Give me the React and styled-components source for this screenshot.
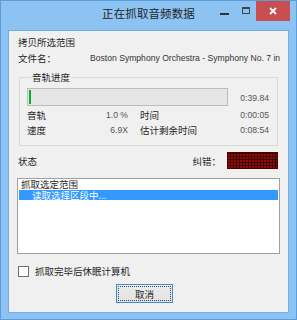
import React from 'react';
import styled, { createGlobalStyle } from 'styled-components';

const Global = createGlobalStyle`
  html, body { margin: 0; padding: 0; background: #fff; }
  body { font-family: "Noto Sans CJK SC", "Liberation Sans", sans-serif; }
  * { box-sizing: border-box; }
`;

const Window = styled.div`
  width: 297px;
  height: 320px;
  background: #8cc3f2;
  border: 1px solid #5d9cd9;
  display: flex;
  flex-direction: column;
`;

const TitleBar = styled.div`
  height: 29px;
  display: grid;
  grid-template-columns: 1fr auto 1fr;
  align-items: start;
`;

const Title = styled.div`
  grid-column: 2;
  font-size: 11.5px;
  line-height: 25px;
  color: #252525;
  letter-spacing: 0.1px;
`;

const Controls = styled.div`
  grid-column: 3;
  justify-self: end;
  display: flex;
  margin-right: 6px;
  height: 20px;
`;

const CtrlBtn = styled.div`
  width: ${p => p.w}px;
  height: 20px;
  display: flex;
  align-items: center;
  justify-content: center;
  background: ${p => p.red ? '#c74f4f' : 'transparent'};
`;

const Client = styled.div`
  flex: 1;
  margin: 0 7px 6px 7px;
  background: #f0f0f0;
  border: 1px solid #74aee2;
  padding: 4px 9px 0 9px;
  font-size: 9.5px;
  color: #262626;
  display: flex;
  flex-direction: column;
`;

const Line = styled.div`
  height: 14px;
  line-height: 14px;
  display: flex;
  white-space: nowrap;
  margin-top: ${p => p.mt || 0}px;
`;

const Label = styled.span`
  flex-shrink: 0;
`;

const FileName = styled.span`
  margin-left: 34px;
  font-family: "Liberation Sans", sans-serif;
  font-size: 8.6px;
  color: #333;
  white-space: nowrap;
`;

const Group = styled.fieldset`
  margin: 6px 1px 0 1px;
  border: 1px solid #d9d9d9;
  padding: 5px 8px 8px 7px;
  display: grid;
  grid-template-columns: 70px 31px 100px 41px;
  row-gap: 1px;
  align-items: center;
`;

const Legend = styled.legend`
  padding: 0 1px;
  margin-left: 4px;
  font-size: 9.5px;
  line-height: 12px;
`;

const Bar = styled.div`
  grid-column: 1 / 4;
  height: 18px;
  background: #e6e6e6;
  border: 1px solid #bcbcbc;
  padding: 1px;
  margin-bottom: 1px;
`;

const Fill = styled.div`
  height: 100%;
  background: #06b025;
`;

const Cell = styled.div`
  height: ${p => p.h || 14}px;
  line-height: ${p => p.h || 14}px;
  text-align: ${p => p.right ? 'right' : 'left'};
  padding-left: ${p => p.pl || 0}px;
  font-family: ${p => p.num ? '"Liberation Sans", sans-serif' : 'inherit'};
  font-size: ${p => p.num ? '8.6px' : 'inherit'};
  color: ${p => p.num ? '#555' : 'inherit'};
  white-space: nowrap;
`;

const StatusRow = styled.div`
  display: flex;
  align-items: center;
  justify-content: space-between;
  margin: 6px 1px 0 0;
  height: 17px;
`;

const Ecc = styled.div`
  display: flex;
  align-items: center;
  gap: 6px;
`;

const Led = styled.div`
  width: 51px;
  height: 17px;
  border: 1px solid #4a0000;
  background-color: #9a0a0a;
  background-image:
    repeating-linear-gradient(90deg, transparent 0 2px, #3a0000 2px 3px),
    repeating-linear-gradient(0deg, transparent 0 2px, #3a0000 2px 3px);
`;

const List = styled.div`
  margin: 9px 0 0 -1px;
  height: 76px;
  width: 263px;
  background: #fff;
  border: 1px solid #a0a0a0;
  padding: 0 1px;
`;

const Item = styled.div`
  height: 10.5px;
  line-height: 10.5px;
  padding-left: ${p => p.indent ? 13 : 2}px;
  background: ${p => p.sel ? '#3399ff' : 'transparent'};
  color: ${p => p.sel ? '#fff' : '#262626'};
  white-space: nowrap;
`;

const CheckRow = styled.label`
  display: flex;
  align-items: center;
  gap: 6px;
  margin-top: 11px;
  height: 12px;
`;

const Box = styled.span`
  width: 11px;
  height: 11px;
  border: 1px solid #707070;
  background: #fff;
`;

const ButtonRow = styled.div`
  display: flex;
  justify-content: center;
  margin: 7px 8px 0 0;
`;

const Button = styled.div`
  width: 57px;
  height: 19px;
  border: 1px solid #3c8ad8;
  background: linear-gradient(#ececec, #e2e2e2);
  padding: 1px;
`;

const Focus = styled.div`
  height: 100%;
  border: 1px dotted #444;
  display: flex;
  align-items: center;
  justify-content: center;
  font-size: 9.5px;
  line-height: 12px;
`;

export default function App() {
  return (
    <>
      <Global />
      <Window>
        <TitleBar>
          <Title>正在抓取音频数据</Title>
          <Controls>
            <CtrlBtn w={23}>
              <svg width="9" height="9" viewBox="0 0 9 9"><rect x="0" y="6" width="9" height="2" fill="#333" /></svg>
            </CtrlBtn>
            <CtrlBtn w={20}>
              <svg width="9" height="8" viewBox="0 0 9 8"><rect x="0.5" y="0.5" width="7" height="6" fill="none" stroke="#444" /><rect x="0.5" y="0.5" width="7" height="1.5" fill="#444" /></svg>
            </CtrlBtn>
            <CtrlBtn w={34} red>
              <svg width="8" height="8" viewBox="0 0 8 8"><path d="M1 1L7 7M7 1L1 7" stroke="#fff" strokeWidth="1.8" /></svg>
            </CtrlBtn>
          </Controls>
        </TitleBar>
        <Client>
          <Line>拷贝所选范围</Line>
          <Line mt={2}><Label>文件名：</Label><FileName>Boston Symphony Orchestra - Symphony No. 7 in</FileName></Line>
          <Group>
            <Legend>音轨进度</Legend>
            <Bar><Fill style={{ width: '1%' }} /></Bar>
            <Cell h={18} right num>0:39.84</Cell>
            <Cell>音轨</Cell>
            <Cell right num>1.0 %</Cell>
            <Cell pl={12}>时间</Cell>
            <Cell right num>0:00:05</Cell>
            <Cell>速度</Cell>
            <Cell right num>6.9X</Cell>
            <Cell pl={12}>估计剩余时间</Cell>
            <Cell right num>0:08:54</Cell>
          </Group>
          <StatusRow>
            <span>状态</span>
            <Ecc>
              <span>纠错：</span>
              <Led />
            </Ecc>
          </StatusRow>
          <List>
            <Item>抓取选定范围</Item>
            <Item sel indent>读取选择区段中...</Item>
          </List>
          <CheckRow>
            <Box />
            <span>抓取完毕后休眠计算机</span>
          </CheckRow>
          <ButtonRow>
            <Button><Focus>取消</Focus></Button>
          </ButtonRow>
        </Client>
      </Window>
    </>
  );
}
